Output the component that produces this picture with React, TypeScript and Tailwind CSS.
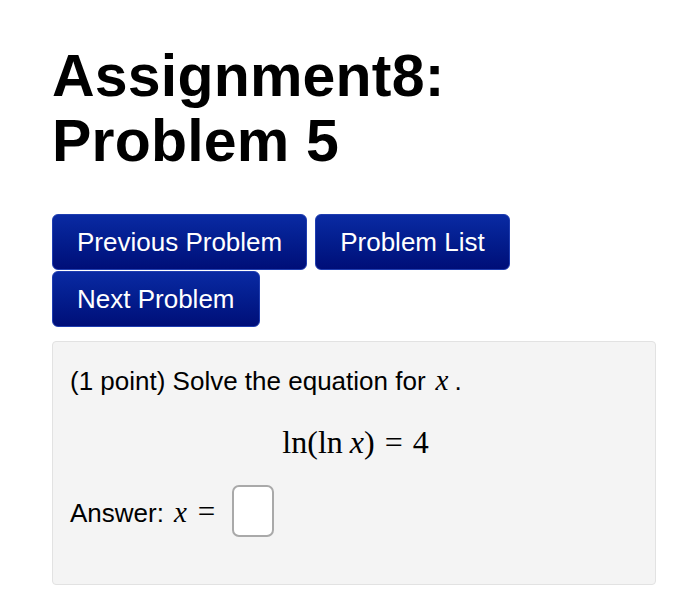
import React from "react";

const btn =
  "h-[56px] px-[24px] rounded-[6px] border border-[#1f3db0] bg-gradient-to-b from-[#0a2aa3] to-[#000e78] text-white text-[26px] leading-none flex items-center";

export default function App() {
  return (
    <div className="w-[700px] h-[615px] bg-white font-['Liberation_Sans',Arial,sans-serif] text-black">
      <div className="pl-[52px] pt-[44px]">
        <h1 className="font-bold text-[59px] leading-[65px] tracking-[0.2px]">
          Assignment8:
          <br />
          Problem 5
        </h1>
        <div className="mt-[40px] flex flex-wrap gap-x-[8px] gap-y-[1px] w-[470px]">
          <button className={btn}>Previous Problem</button>
          <button className={btn}>Problem List</button>
          <button className={btn}>Next Problem</button>
        </div>
        <div className="mt-[14px] w-[604px] h-[244px] bg-[#f4f4f4] border border-[#e2e2e2] rounded-[4px] pl-[17px] pt-[22px]">
          <p className="text-[26px] leading-[32px] flex items-baseline">
            <span>(1 point) Solve the equation for</span>
            <span className="ml-[10px] font-['Liberation_Serif',serif] italic text-[29px]">x</span>
            <span className="ml-[6px]">.</span>
          </p>
          <div className="mt-[27px] flex justify-center pr-[14px]">
            <span className="font-['Liberation_Serif',serif] text-[32px] leading-[36px] flex items-baseline">
              <span>ln(ln</span>
              <span className="ml-[7px] italic">x</span>
              <span>)</span>
              <span className="mx-[10px]">=</span>
              <span>4</span>
            </span>
          </div>
          <div className="mt-[28px] flex items-center">
            <span className="text-[26px] leading-[32px] flex items-baseline">
              <span>Answer:</span>
              <span className="ml-[10px] font-['Liberation_Serif',serif] italic text-[29px]">x</span>
              <span className="ml-[11px] font-['Liberation_Serif',serif] text-[31px]">=</span>
            </span>
            <div className="ml-[17px] -mt-[3px] w-[42px] h-[52px] bg-white border-2 border-[#a9a9a9] rounded-[7px]" />
          </div>
        </div>
      </div>
    </div>
  );
}
